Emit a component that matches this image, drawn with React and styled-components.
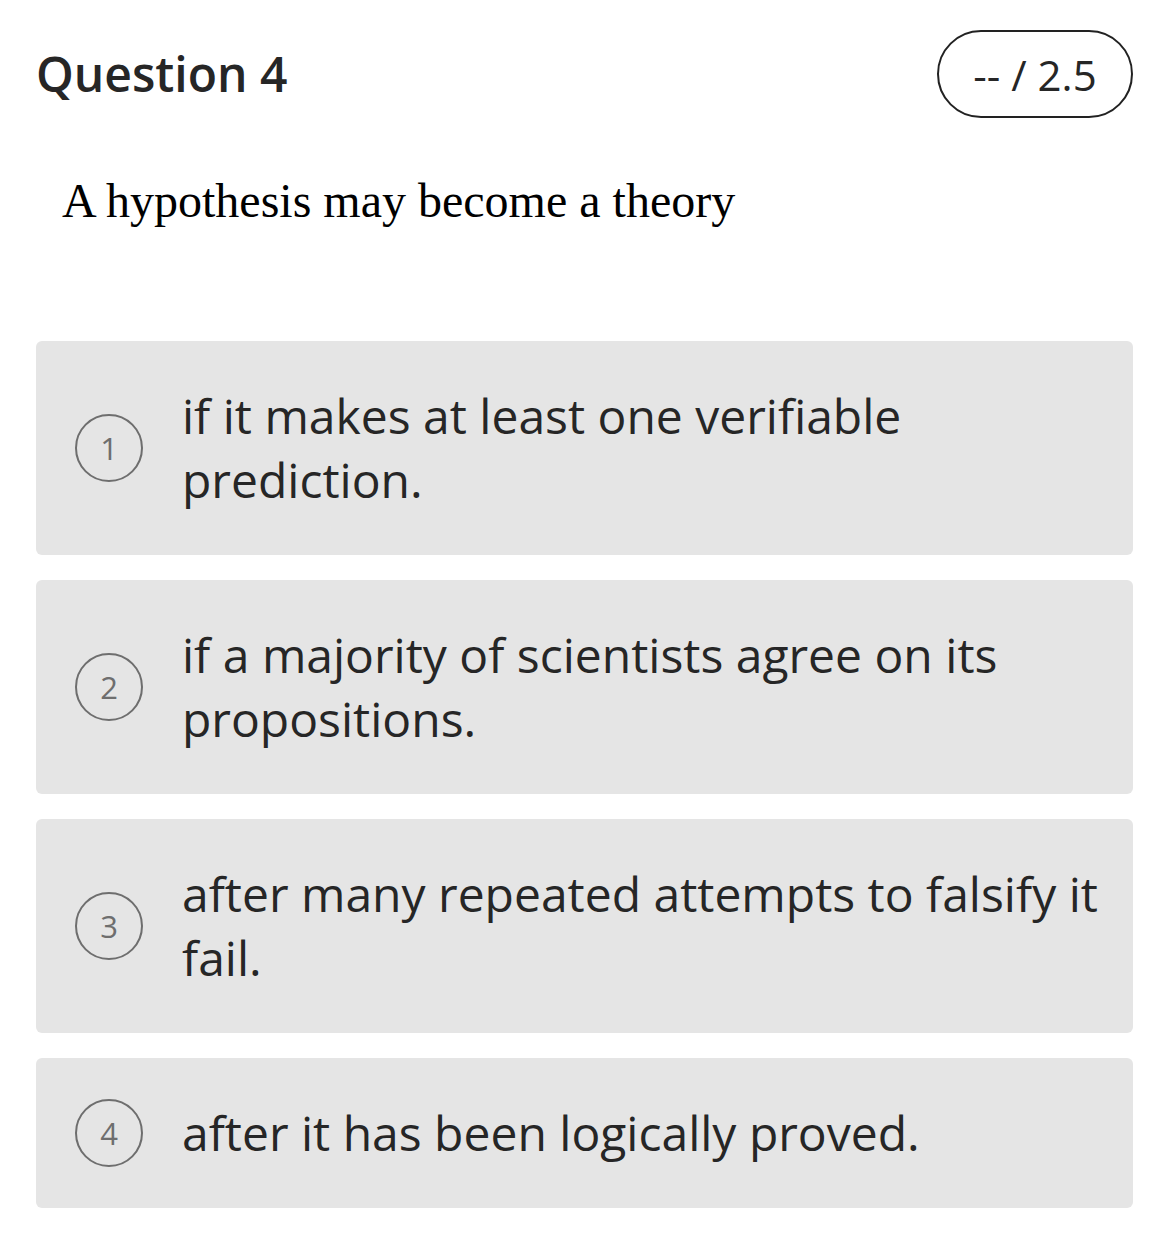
import React from "react";
import styled, { createGlobalStyle } from "styled-components";

const Global = createGlobalStyle`
  html, body { margin: 0; padding: 0; background: #ffffff; }
  body { font-family: "Open Sans", "Liberation Sans", sans-serif; color: #262626; }
  * { box-sizing: border-box; }
`;

const Page = styled.div`
  padding: 30px 37px 40px 36px;
`;

const Header = styled.div`
  display: flex;
  justify-content: space-between;
  align-items: center;
`;

const Title = styled.h1`
  margin: 0;
  font-size: 48px;
  font-weight: 600;
  color: #262626;
  line-height: 1;
`;

const Score = styled.div`
  width: 196px;
  height: 88px;
  border: 2.5px solid #222;
  border-radius: 44px;
  display: flex;
  align-items: center;
  justify-content: center;
  font-size: 42px;
  color: #262626;
`;

const Prompt = styled.p`
  margin: 54px 0 0 26px;
  font-family: "Liberation Serif", "Times New Roman", serif;
  font-size: 48px;
  color: #000;
  line-height: 1.2;
`;

const Options = styled.div`
  display: flex;
  flex-direction: column;
  gap: 25px;
  margin-top: 111px;
`;

const Option = styled.div`
  display: flex;
  align-items: center;
  gap: 39px;
  background: #e5e5e5;
  border-radius: 6px;
  padding: 43px 30px 43px 39px;
`;

const Badge = styled.div`
  flex: none;
  width: 68px;
  height: 68px;
  margin: -5px 0;
  border-radius: 50%;
  border: 2.5px solid #6e6e6e;
  display: flex;
  align-items: center;
  justify-content: center;
  font-size: 31px;
  color: #6e6e6e;
`;

const Text = styled.div`
  font-size: 48px;
  line-height: 64px;
  color: #262626;
`;

const options = [
  "if it makes at least one verifiable prediction.",
  "if a majority of scientists agree on its propositions.",
  "after many repeated attempts to falsify it fail.",
  "after it has been logically proved.",
];

export default function App() {
  return (
    <>
      <Global />
      <Page>
        <Header>
          <Title>Question 4</Title>
          <Score>-- / 2.5</Score>
        </Header>
        <Prompt>A hypothesis may become a theory</Prompt>
        <Options>
          {options.map((t, i) => (
            <Option key={i}>
              <Badge>{i + 1}</Badge>
              <Text>{t}</Text>
            </Option>
          ))}
        </Options>
      </Page>
    </>
  );
}
